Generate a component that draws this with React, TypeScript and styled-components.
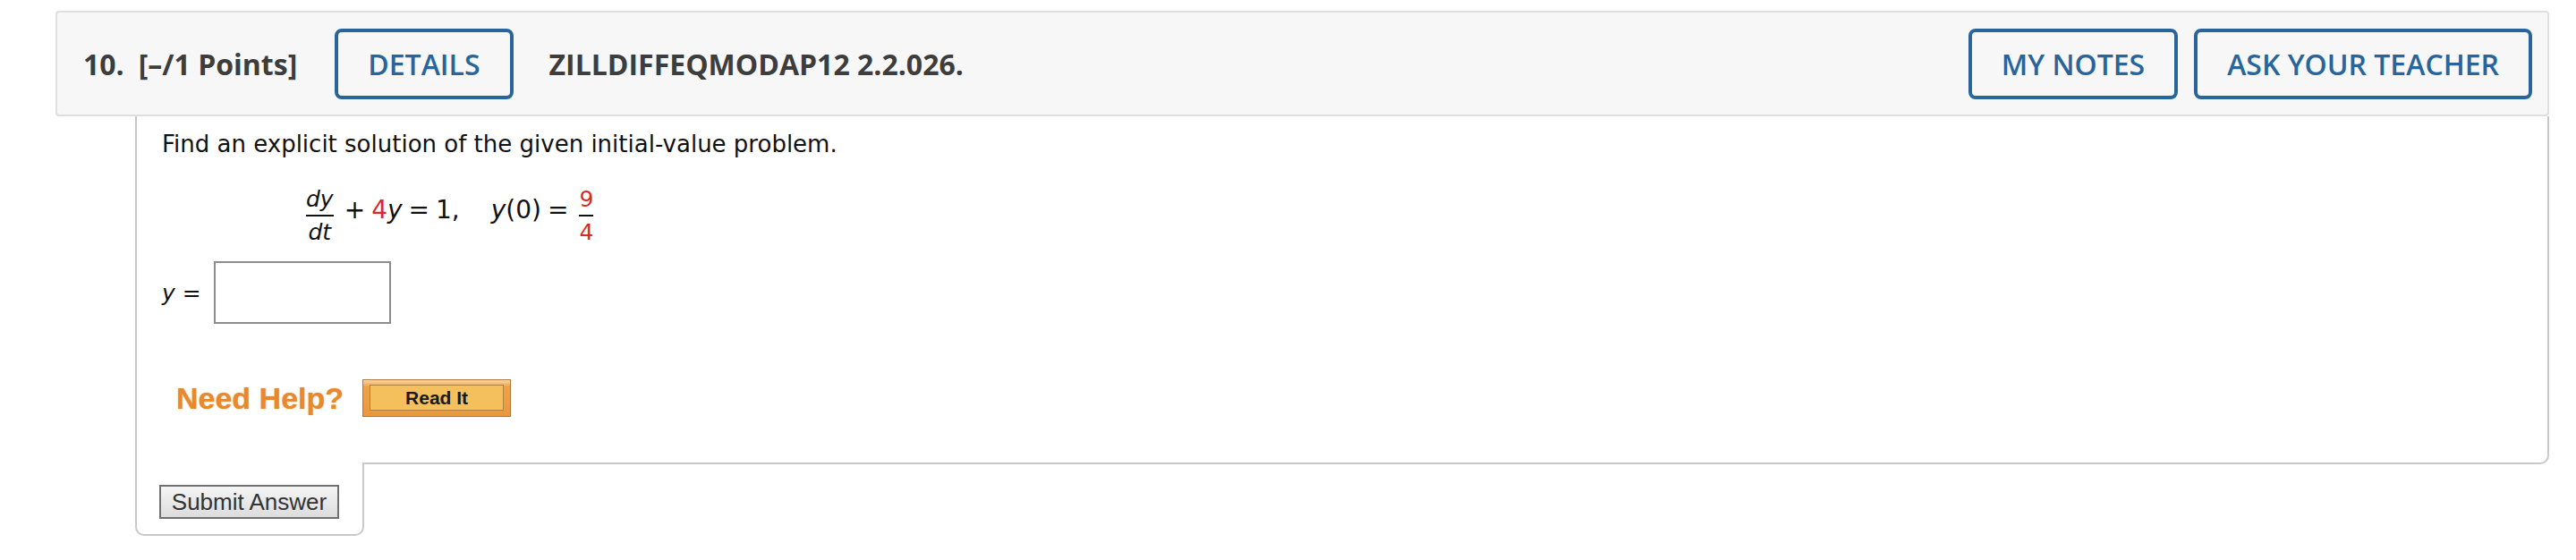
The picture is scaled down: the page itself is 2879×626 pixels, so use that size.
import React from "react";
import styled, { createGlobalStyle } from "styled-components";

const Global = createGlobalStyle`
  html, body { margin: 0; padding: 0; background: #ffffff; }
  body { font-family: "DejaVu Sans", Verdana, sans-serif; }
`;

const Page = styled.div`
  margin: 12px 30px 0 62px;
`;

const Header = styled.div`
  box-sizing: border-box;
  height: 118px;
  display: flex;
  align-items: center;
  padding: 0 17px 0 29px;
  background: #f7f7f7;
  border: 2px solid #dfdfdf;
  border-radius: 4px;
  font-family: "Open Sans", sans-serif;
  color: #3d3d3d;
`;

const HeadText = styled.span<{ $ml?: number }>`
  margin-left: ${(p) => p.$ml ?? 0}px;
  font-weight: 700;
  font-size: 32px;
  white-space: nowrap;
`;

const OutlineButton = styled.button<{ $ml?: number }>`
  box-sizing: border-box;
  height: 79px;
  margin-left: ${(p) => p.$ml ?? 0}px;
  padding: 0 33px;
  border: 4px solid #27659a;
  border-radius: 8px;
  background: transparent;
  color: #27659a;
  font-family: "Open Sans", sans-serif;
  font-weight: 600;
  font-size: 32px;
  white-space: nowrap;
`;

const Spacer = styled.div`
  flex: 1;
`;

const Body = styled.div`
  margin-left: 89px;
  border: 2px solid #c9c9c9;
  border-top: none;
  border-bottom-right-radius: 10px;
  padding: 16px 0 51px 28px;
  color: #111;
`;

const Prompt = styled.p`
  margin: 0;
  font-size: 26px;
  line-height: 30px;
`;

const Equation = styled.div`
  margin: 33px 0 0 156px;
  font-size: 28px;
  line-height: 30px;
  white-space: nowrap;
`;

const Frac = styled.span`
  display: inline-block;
  vertical-align: -24px;
  text-align: center;
  font-size: 25px;
  padding: 0 5px;
`;

const Num = styled.span<{ $red?: boolean }>`
  display: block;
  line-height: 27px;
  padding-bottom: 4px;
  border-bottom: 2px solid #111;
  color: ${(p) => (p.$red ? "#d22c2c" : "inherit")};
`;

const Den = styled.span<{ $red?: boolean }>`
  display: block;
  line-height: 27px;
  padding-top: 4px;
  color: ${(p) => (p.$red ? "#d22c2c" : "inherit")};
`;

const Var = styled.i`
  font-style: italic;
`;

const Red = styled.span`
  color: #d22c2c;
`;

const Op = styled.span`
  margin: 0 7px;
`;

const Quad = styled.span`
  display: inline-block;
  width: 35px;
`;

const AnswerRow = styled.div`
  margin-top: 19px;
  display: flex;
  align-items: center;
  gap: 14px;
  font-size: 25px;
`;

const AnswerInput = styled.input`
  box-sizing: border-box;
  width: 198px;
  height: 70px;
  margin: 0;
  border: 2px solid #8c8c8c;
  background: #fff;
`;

const HelpRow = styled.div`
  margin-top: 62px;
  height: 42px;
  display: flex;
  align-items: center;
`;

const NeedHelp = styled.span`
  margin-left: 16px;
  font-family: "Liberation Sans", Arial, sans-serif;
  font-weight: 700;
  font-size: 34px;
  color: #e8892f;
  text-shadow: 0 0 1.5px rgba(232, 137, 47, 0.7);
`;

const ReadIt = styled.button`
  box-sizing: border-box;
  margin-left: 21px;
  width: 166px;
  height: 42px;
  padding: 5px 7px 6px 7px;
  border: 1px solid #ad773a;
  background: linear-gradient(#f9d6a8 0%, #efa24a 18%, #eb973d 100%);
  display: flex;
`;

const ReadItInner = styled.span`
  flex: 1;
  display: flex;
  align-items: center;
  justify-content: center;
  border: 1px solid #b3813e;
  background: #f4c05d;
  font-family: "Liberation Sans", Arial, sans-serif;
  font-weight: 700;
  font-size: 21px;
  color: #1a1a1a;
`;

const SubmitBox = styled.div`
  box-sizing: border-box;
  width: 256px;
  margin: -2px 0 0 89px;
  padding: 25px 0 17px 25px;
  border: 2px solid #c9c9c9;
  border-top: none;
  border-radius: 0 0 10px 10px;
  background: #fff;
`;

const SubmitButton = styled.button`
  box-sizing: border-box;
  width: 201px;
  height: 38px;
  padding: 0;
  border: 2px solid #707070;
  background: linear-gradient(#f5f5f5, #dcdcdc);
  font-family: "Liberation Sans", Arial, sans-serif;
  font-size: 26px;
  color: #333;
  display: block;
`;

export default function App() {
  return (
    <>
      <Global />
      <Page>
        <Header>
          <HeadText>10.</HeadText>
          <HeadText $ml={16}>[–/1 Points]</HeadText>
          <OutlineButton $ml={42}>DETAILS</OutlineButton>
          <HeadText $ml={40}>ZILLDIFFEQMODAP12 2.2.026.</HeadText>
          <Spacer />
          <OutlineButton>MY NOTES</OutlineButton>
          <OutlineButton $ml={18}>ASK YOUR TEACHER</OutlineButton>
        </Header>
        <Body>
          <Prompt>Find an explicit solution of the given initial-value problem.</Prompt>
          <Equation>
            <Frac>
              <Num>
                <Var>dy</Var>
              </Num>
              <Den>
                <Var>dt</Var>
              </Den>
            </Frac>
            <Op>+</Op>
            <Red>4</Red>
            <Var>y</Var>
            <Op>=</Op>
            1,
            <Quad />
            <Var>y</Var>(0)
            <Op>=</Op>
            <Frac>
              <Num $red>9</Num>
              <Den $red>4</Den>
            </Frac>
          </Equation>
          <AnswerRow>
            <span>
              <Var>y</Var> =
            </span>
            <AnswerInput type="text" aria-label="y" />
          </AnswerRow>
          <HelpRow>
            <NeedHelp>Need Help?</NeedHelp>
            <ReadIt>
              <ReadItInner>Read It</ReadItInner>
            </ReadIt>
          </HelpRow>
        </Body>
        <SubmitBox>
          <SubmitButton>Submit Answer</SubmitButton>
        </SubmitBox>
      </Page>
    </>
  );
}
